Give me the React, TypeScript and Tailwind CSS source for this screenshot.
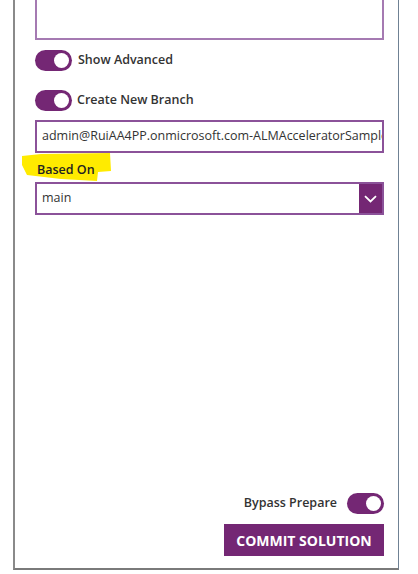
import React from 'react'

const font = { fontFamily: '"Open Sans", "Noto Sans", sans-serif' }

function Toggle() {
  return (
    <div className="flex h-[21px] w-[37px] shrink-0 items-center justify-end rounded-full bg-[#742774] pr-[3px]">
      <div className="h-[15px] w-[15px] rounded-full bg-white" />
    </div>
  )
}

function Highlight() {
  return (
    <svg
      className="absolute left-[21px] top-[152px]"
      width="92"
      height="31"
      viewBox="0 0 92 31"
    >
      <polygon
        points="1,4 20,2 89,1 90,19 77,20 76,29 40,27 6,23 1,13"
        fill="#ffeb00"
      />
    </svg>
  )
}

export default function App() {
  return (
    <div
      className="relative h-[574px] w-[418px] overflow-hidden bg-white text-[12.5px] text-[#333333]"
      style={font}
    >
      <Highlight />
      <div className="relative ml-[13px] flex h-[570px] w-[386px] flex-col border-b-2 border-l-2 border-r border-b-[#7a7a7a] border-l-[#8a8a8a] border-r-[#6f8194] pl-[20px] pr-[14px]">
        {/* notes box, top is scrolled out of view */}
        <div className="h-[40px] w-[349px] border-x-2 border-b-2 border-[#a57ab2]" />

        <div className="mt-[10px] flex h-[21px] items-center gap-[6px]">
          <Toggle />
          <span className="font-semibold">Show Advanced</span>
        </div>

        <div className="mt-[19px] flex h-[21px] items-center gap-[5px]">
          <Toggle />
          <span className="font-semibold">Create New Branch</span>
        </div>

        <div className="mt-[9px] flex h-[33px] items-center overflow-hidden border-2 border-[#8b5299] pl-[5px]">
          <span className="whitespace-nowrap">
            admin@RuiAA4PP.onmicrosoft.com-ALMAcceleratorSampleSolution
          </span>
        </div>

        <div className="relative h-[29px] pl-[2px] pt-[8px] font-semibold leading-[18px] text-[#222222]">
          Based On
        </div>

        <div className="flex h-[33px] items-stretch border-2 border-[#8b5299]">
          <div className="flex flex-1 items-center pl-[5px]">main</div>
          <div className="flex w-[23px] items-center justify-center bg-[#742774]">
            <svg width="13" height="8" viewBox="0 0 13 8" fill="none">
              <path d="M1 1.2 L6.5 6.5 L12 1.2" stroke="white" strokeWidth="1.8" />
            </svg>
          </div>
        </div>

        <div className="flex-1" />

        <div className="flex items-center justify-end gap-[10px]">
          <span className="font-semibold">Bypass Prepare</span>
          <Toggle />
        </div>

        <div className="mb-[12px] mt-[10px] flex justify-end">
          <button className="flex h-[32px] w-[160px] items-center justify-center bg-[#742774] text-[14px] font-bold text-white">
            COMMIT SOLUTION
          </button>
        </div>
      </div>
    </div>
  )
}
